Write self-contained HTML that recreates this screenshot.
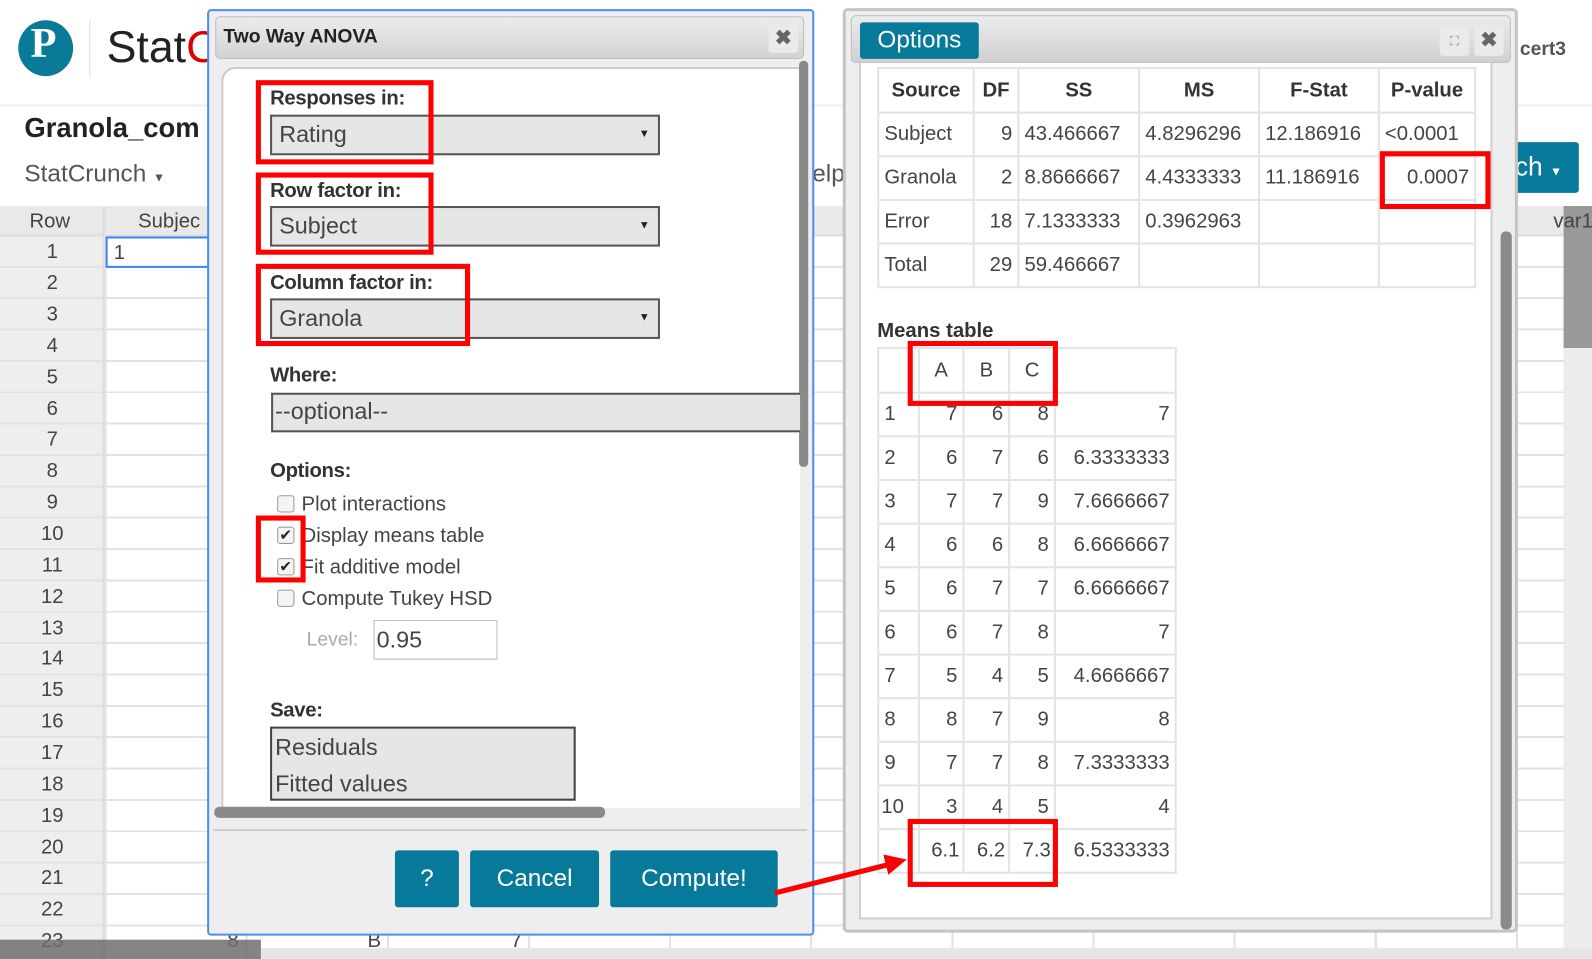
<!DOCTYPE html>
<html><head><meta charset="utf-8">
<style>
*{margin:0;padding:0;box-sizing:border-box}
html,body{width:1592px;height:959px;overflow:hidden;background:#fff}
#w{position:absolute;left:0;top:0;width:1568px;height:945px;transform:scale(1.01531,1.01481);transform-origin:0 0;font-family:"Liberation Sans",sans-serif;color:#333}
.a{position:absolute}
.rl{position:absolute;left:0;width:103px;text-align:center;font-size:20px;color:#444}
.red{position:absolute;border:5px solid #f00}
.lbl{position:absolute;font-weight:bold;font-size:20px;color:#333;letter-spacing:-0.3px}
.sel{position:absolute;left:266px;width:384px;height:40px;background:#e6e6e6;border:2px solid #555;font-size:23px;padding:4px 0 0 7px;color:#444}
.sel:after{content:"▼";position:absolute;right:8px;top:11px;font-size:11px;color:#222}
.cb{position:absolute;left:273px;width:17px;height:17px;border:1px solid #999;border-radius:3px;background:#f4f4f4;font-size:15px;line-height:15px;text-align:center;color:#222}
.ct{position:absolute;left:297px;font-size:20px;color:#444}
.btn{position:absolute;top:838px;height:56px;background:#07799a;border-radius:3px;color:#fff;font-size:24px;text-align:center;line-height:56px}
table{border-collapse:collapse;position:absolute}
td,th{border:2px solid #e3e3e3;font-size:20px;color:#444;padding:0 5px;white-space:nowrap}
th{font-weight:bold;color:#333}
</style></head><body><div id="w">
<!-- header -->
<div class="a" style="left:18px;top:20px;width:54px;height:55px;border-radius:50%;background:#0a7a99"></div>
<div class="a" style="left:30px;top:19px;color:#fff;font-size:42px;font-weight:bold;font-family:'Liberation Serif',serif">P</div>
<div class="a" style="left:88px;top:20px;width:1px;height:56px;background:#ddd"></div>
<div class="a" style="left:105px;top:22px;font-size:44px;color:#222">Stat<span style="color:#d00">C</span></div>
<div class="a" style="left:1497px;top:38px;font-size:19px;font-weight:bold;color:#555">cert3</div>
<div class="a" style="left:0;top:103px;width:1568px;height:2px;background:#eee"></div>
<div class="a" style="left:24px;top:111px;font-size:27px;font-weight:bold;color:#222">Granola_com</div>
<div class="a" style="left:24px;top:158px;font-size:24px;color:#555">StatCrunch <span style="font-size:12px">▼</span></div>
<div class="a" style="left:800px;top:158px;font-size:24px;color:#555">elp</div>
<div class="a" style="left:1490px;top:140px;width:65px;height:50px;background:#07799a;border-radius:3px;color:#fff;font-size:26px;line-height:48px;padding-left:2px">ch <span style="font-size:12px">▼</span></div>
<!-- grid -->
<div class="a" style="left:0;top:203px;width:1568px;height:30px;background:#e9e9e9;border-bottom:2px solid #ddd"></div>
<div class="a" style="left:0;top:233px;width:103px;height:712px;background:#eee"></div>
<div class="a" style="left:0;top:233px;width:1568px;height:700px;background:repeating-linear-gradient(to bottom,transparent 0,transparent 29px,#e2e2e2 29px,#e2e2e2 30.9px)"></div>
<div class="a" style="left:103px;top:203px;width:1465px;height:742px;background:repeating-linear-gradient(to right,#e2e2e2 0,#e2e2e2 2px,transparent 2px,transparent 139px)"></div>
<div class="a" style="left:0;top:203px;width:103px;height:742px;border-right:2px solid #ddd"></div>
<div class="a" style="left:1540px;top:203px;width:28px;height:140px;background:#999"></div>
<div class="a" style="left:1540px;top:343px;width:28px;height:602px;background:#ececec"></div>
<div class="a" style="left:29px;top:207px;font-size:20px;color:#444">Row</div>
<div class="a" style="left:136px;top:207px;font-size:20px;color:#444">Subjec</div>
<div class="a" style="left:1530px;top:207px;font-size:20px;color:#444">var1</div>
<div class="a" style="left:104px;top:233px;width:110px;height:31px;border:2px solid #3b82f6;background:#fff;font-size:20px;padding:3px 0 0 6px;color:#444">1</div>
<div class="rl" style="top:237px">1</div><div class="rl" style="top:268px">2</div><div class="rl" style="top:299px">3</div><div class="rl" style="top:330px">4</div><div class="rl" style="top:361px">5</div><div class="rl" style="top:392px">6</div><div class="rl" style="top:422px">7</div><div class="rl" style="top:453px">8</div><div class="rl" style="top:484px">9</div><div class="rl" style="top:515px">10</div><div class="rl" style="top:546px">11</div><div class="rl" style="top:577px">12</div><div class="rl" style="top:608px">13</div><div class="rl" style="top:638px">14</div><div class="rl" style="top:669px">15</div><div class="rl" style="top:700px">16</div><div class="rl" style="top:731px">17</div><div class="rl" style="top:762px">18</div><div class="rl" style="top:793px">19</div><div class="rl" style="top:824px">20</div><div class="rl" style="top:854px">21</div><div class="rl" style="top:885px">22</div><div class="rl" style="top:916px">23</div>
<div class="a" style="left:224px;top:916px;font-size:20px;color:#444">8</div>
<div class="a" style="left:362px;top:916px;font-size:20px;color:#444">B</div>
<div class="a" style="left:503px;top:916px;font-size:20px;color:#444">7</div>
<div class="a" style="left:0;top:926px;width:257px;height:19px;background:rgba(110,110,110,0.85)"></div>
<div class="a" style="left:257px;top:934px;width:1311px;height:11px;background:#e6e6e6"></div>

<!-- ANOVA dialog -->
<div class="a" style="left:204px;top:9px;width:598px;height:913px;background:#eee;border:2px solid #4a8ff0;border-radius:4px"></div>
<div class="a" style="left:212px;top:16px;width:580px;height:42px;background:linear-gradient(#ececec,#d3d3d3);border:1px solid #bbb;border-radius:5px"></div>
<div class="a" style="left:220px;top:26px;font-size:19px;font-weight:bold;color:#222">Two Way ANOVA</div>
<div class="a" style="left:757px;top:24px;width:29px;height:28px;background:#eaeaea;border-radius:3px;font-size:20px;font-weight:bold;color:#666;text-align:center;line-height:28px">✖</div>
<div class="a" style="left:218px;top:66px;width:570px;height:730px;background:#fff;border-top:2px solid #ccc;border-left:2px solid #ccc;border-top-left-radius:14px"></div>
<div class="a" style="left:787px;top:60px;width:9px;height:400px;background:#8a8a8a;border-radius:4px"></div>
<div class="a" style="left:211px;top:795px;width:385px;height:11px;background:#8a8a8a;border-radius:5px"></div>
<div class="a" style="left:210px;top:817px;width:585px;height:2px;background:#ccc"></div>

<div class="lbl" style="left:266px;top:86px">Responses in:</div>
<div class="sel" style="top:113px">Rating</div>
<div class="lbl" style="left:266px;top:177px">Row factor in:</div>
<div class="sel" style="top:203px">Subject</div>
<div class="lbl" style="left:266px;top:268px">Column factor in:</div>
<div class="sel" style="top:294px">Granola</div>
<div class="lbl" style="left:266px;top:359px">Where:</div>
<div class="a" style="left:267px;top:387px;width:521px;height:39px;background:#e6e6e6;border:2px solid #555;border-right:none;font-size:23px;padding:3px 0 0 2px;color:#444">--optional--</div>
<div class="lbl" style="left:266px;top:453px">Options:</div>
<div class="cb" style="top:488px"></div><div class="ct" style="top:486px">Plot interactions</div>
<div class="cb" style="top:519px">✔</div><div class="ct" style="top:517px">Display means table</div>
<div class="cb" style="top:550px">✔</div><div class="ct" style="top:548px">Fit additive model</div>
<div class="cb" style="top:581px"></div><div class="ct" style="top:579px">Compute Tukey HSD</div>
<div class="a" style="left:302px;top:620px;font-size:19px;color:#aaa">Level:</div>
<div class="a" style="left:368px;top:611px;width:122px;height:39px;border:1px solid #bbb;font-size:23px;padding:5px 0 0 2px;color:#444">0.95</div>
<div class="lbl" style="left:266px;top:689px">Save:</div>
<div class="a" style="left:266px;top:716px;width:301px;height:73px;background:#e6e6e6;border:2px solid #444;font-size:23px;line-height:36px;padding-left:3px;color:#444">Residuals<br>Fitted values</div>

<div class="btn" style="left:389px;width:63px">?</div>
<div class="btn" style="left:463px;width:127px">Cancel</div>
<div class="btn" style="left:601px;width:165px">Compute!</div>

<div class="red" style="left:252px;top:79px;width:175px;height:83px"></div>
<div class="red" style="left:252px;top:170px;width:175px;height:81px"></div>
<div class="red" style="left:252px;top:260px;width:211px;height:81px"></div>
<div class="red" style="left:252px;top:508px;width:49px;height:66px"></div>

<!-- Options panel -->
<div class="a" style="left:830px;top:8px;width:665px;height:911px;background:#eee;border:3px solid #c4c4c4;border-radius:5px"></div>
<div class="a" style="left:838px;top:15px;width:650px;height:47px;background:linear-gradient(#ececec,#d0d0d0);border:1px solid #bbb;border-radius:5px"></div>
<div class="a" style="left:847px;top:22px;width:117px;height:36px;background:#07799a;border-radius:3px;color:#fff;font-size:24px;line-height:36px;text-align:center">Options</div>
<div class="a" style="left:1418px;top:26px;width:29px;height:29px;background:#eaeaea;border-radius:3px;font-size:13px;color:#888;text-align:center;line-height:29px">⛶</div>
<div class="a" style="left:1452px;top:26px;width:29px;height:29px;background:#eaeaea;border-radius:3px;font-size:20px;font-weight:bold;color:#666;text-align:center;line-height:29px">✖</div>
<div class="a" style="left:846px;top:62px;width:624px;height:844px;background:#fff;border:2px solid #d0d0d0;border-top:none"></div>
<div class="a" style="left:1478px;top:228px;width:11px;height:688px;background:#8a8a8a;border-radius:5px"></div>

<table style="left:864px;top:66px">
<tr style="height:44px"><th style="width:94px">Source</th><th style="width:44px">DF</th><th style="width:119px">SS</th><th style="width:118px">MS</th><th style="width:118px">F-Stat</th><th style="width:95px">P-value</th></tr>
<tr style="height:43px"><td>Subject</td><td align="right">9</td><td>43.466667</td><td>4.8296296</td><td>12.186916</td><td>&lt;0.0001</td></tr>
<tr style="height:43px"><td>Granola</td><td align="right">2</td><td>8.8666667</td><td>4.4333333</td><td>11.186916</td><td align="right">0.0007</td></tr>
<tr style="height:43px"><td>Error</td><td align="right">18</td><td>7.1333333</td><td>0.3962963</td><td></td><td></td></tr>
<tr style="height:43px"><td>Total</td><td align="right">29</td><td>59.466667</td><td></td><td></td><td></td></tr>
</table>
<div class="a" style="left:864px;top:315px;font-size:20px;font-weight:bold;color:#333">Means table</div>
<table style="left:864px;top:342px;table-layout:fixed;width:293px">
<colgroup><col style="width:40px"><col style="width:44px"><col style="width:45px"><col style="width:45px"><col style="width:119px"></colgroup>
<tr style="height:44px"><td></td><td align="center">A</td><td align="center">B</td><td align="center">C</td><td></td></tr>
<tr style="height:43px"><td>1</td><td align="right">7</td><td align="right">6</td><td align="right">8</td><td align="right">7</td></tr>
<tr style="height:43px"><td>2</td><td align="right">6</td><td align="right">7</td><td align="right">6</td><td align="right">6.3333333</td></tr>
<tr style="height:43px"><td>3</td><td align="right">7</td><td align="right">7</td><td align="right">9</td><td align="right">7.6666667</td></tr>
<tr style="height:43px"><td>4</td><td align="right">6</td><td align="right">6</td><td align="right">8</td><td align="right">6.6666667</td></tr>
<tr style="height:43px"><td>5</td><td align="right">6</td><td align="right">7</td><td align="right">7</td><td align="right">6.6666667</td></tr>
<tr style="height:43px"><td>6</td><td align="right">6</td><td align="right">7</td><td align="right">8</td><td align="right">7</td></tr>
<tr style="height:43px"><td>7</td><td align="right">5</td><td align="right">4</td><td align="right">5</td><td align="right">4.6666667</td></tr>
<tr style="height:43px"><td>8</td><td align="right">8</td><td align="right">7</td><td align="right">9</td><td align="right">8</td></tr>
<tr style="height:43px"><td>9</td><td align="right">7</td><td align="right">7</td><td align="right">8</td><td align="right">7.3333333</td></tr>
<tr style="height:43px"><td style="padding:0 2px">10</td><td align="right">3</td><td align="right">4</td><td align="right">5</td><td align="right">4</td></tr>
<tr style="height:43px"><td></td><td align="right" style="padding:0 3px">6.1</td><td align="right" style="padding:0 3px">6.2</td><td align="right" style="padding:0 3px">7.3</td><td align="right">6.5333333</td></tr>
</table>

<div class="red" style="left:1359px;top:149px;width:109px;height:57px"></div>
<div class="red" style="left:894px;top:336px;width:148px;height:64px"></div>
<div class="red" style="left:894px;top:807px;width:148px;height:67px"></div>

<svg class="a" style="left:0;top:0" width="1568" height="945">
<line x1="763" y1="880" x2="875" y2="852" stroke="#f00" stroke-width="5"/>
<polygon points="893,847 870,842 875,862" fill="#f00"/>
</svg>
</div></body></html>
